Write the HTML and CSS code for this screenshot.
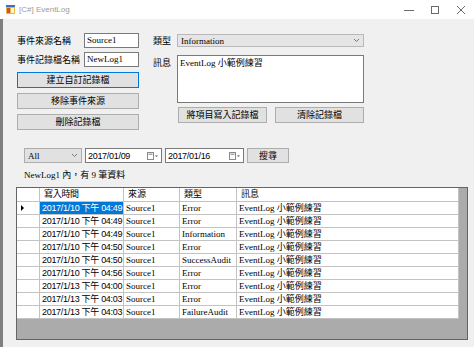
FILE: index.html
```html
<!DOCTYPE html>
<html>
<head>
    <meta charset="utf-8">
    <title>[C#] EventLog</title>
    <link rel="stylesheet" href="styles.css">
</head>
<body>
<div class="window">
    <div class="titlebar">
        <svg class="app-icon" width="9" height="9" viewBox="0 0 9 9">
            <rect x="0" y="0" width="9" height="9" fill="#e8b83a"/>
            <rect x="0" y="0" width="9" height="2" fill="#3a6fc4"/>
            <rect x="1" y="3" width="3" height="5" fill="#d9483b"/>
            <rect x="5" y="3" width="3" height="5" fill="#fff4c8"/>
        </svg>
        <span class="title">[C#] EventLog</span>
        <div class="caption-btns">
            <svg width="10" height="10" viewBox="0 0 10 10"><path d="M0 5.5h10" stroke="#6b6b6b" stroke-width="1"/></svg>
            <svg width="10" height="10" viewBox="0 0 10 10"><rect x="1.5" y="1.5" width="7" height="7" fill="none" stroke="#6b6b6b" stroke-width="1"/></svg>
            <svg width="10" height="10" viewBox="0 0 10 10"><path d="M1 1l8 8M9 1l-8 8" stroke="#6b6b6b" stroke-width="1"/></svg>
        </div>
    </div>

    <div class="client">
        <div class="top">
            <div class="left-col">
                <div class="field">
                    <span class="label wide">事件來源名稱</span>
                    <div class="textbox">Source1</div>
                </div>
                <div class="field second">
                    <span class="label wide">事件記錄檔名稱</span>
                    <div class="textbox">NewLog1</div>
                </div>
                <div class="btn focused">建立自訂記錄檔</div>
                <div class="btn">移除事件來源</div>
                <div class="btn">刪除記錄檔</div>
            </div>

            <div class="right-col">
                <div class="field">
                    <span class="label">類型</span>
                    <div class="combo type-combo">
                        <span>Information</span>
                        <svg width="7" height="5" viewBox="0 0 7 5"><path d="M1 1l2.5 2.5L6 1" fill="none" stroke="#777" stroke-width="1"/></svg>
                    </div>
                </div>
                <div class="field msg">
                    <span class="label">訊息</span>
                    <div class="textarea">EventLog 小範例練習</div>
                </div>
                <div class="btn-row">
                    <div class="btn">將項目寫入記錄檔</div>
                    <div class="btn">清除記錄檔</div>
                </div>
            </div>
        </div>

        <div class="filter">
            <div class="combo all-combo">
                <span>All</span>
                <svg width="7" height="5" viewBox="0 0 7 5"><path d="M1 1l2.5 2.5L6 1" fill="none" stroke="#777" stroke-width="1"/></svg>
            </div>
            <div class="datepicker date-from">
                <span>2017/01/09</span>
                <svg width="11" height="8" viewBox="0 0 11 8"><rect x="0.5" y="0.5" width="6" height="7" fill="#fff" stroke="#8a8a8a"/><rect x="1.5" y="1.5" width="4" height="1.5" fill="#a8a8a8"/><path d="M8 3.5h3L9.5 5z" fill="#555"/></svg>
            </div>
            <div class="datepicker date-to">
                <span>2017/01/16</span>
                <svg width="11" height="8" viewBox="0 0 11 8"><rect x="0.5" y="0.5" width="6" height="7" fill="#fff" stroke="#8a8a8a"/><rect x="1.5" y="1.5" width="4" height="1.5" fill="#a8a8a8"/><path d="M8 3.5h3L9.5 5z" fill="#555"/></svg>
            </div>
            <div class="btn search">搜尋</div>
        </div>

        <div class="count">NewLog1 內，有 9 筆資料</div>

        <div class="grid">
            <div class="grid-row header">
                <div class="cell rowhead"></div>
                <div class="cell c-time">寫入時間</div>
                <div class="cell c-src">來源</div>
                <div class="cell c-type">類型</div>
                <div class="cell c-msg">訊息</div>
            </div>
            <div class="grid-row">
                <div class="cell rowhead"><span class="current"></span></div>
                <div class="cell c-time selected">2017/1/10 下午 04:49</div>
                <div class="cell c-src">Source1</div>
                <div class="cell c-type">Error</div>
                <div class="cell c-msg">EventLog 小範例練習</div>
            </div>
            <div class="grid-row">
                <div class="cell rowhead"></div>
                <div class="cell c-time">2017/1/10 下午 04:49</div>
                <div class="cell c-src">Source1</div>
                <div class="cell c-type">Error</div>
                <div class="cell c-msg">EventLog 小範例練習</div>
            </div>
            <div class="grid-row">
                <div class="cell rowhead"></div>
                <div class="cell c-time">2017/1/10 下午 04:49</div>
                <div class="cell c-src">Source1</div>
                <div class="cell c-type">Information</div>
                <div class="cell c-msg">EventLog 小範例練習</div>
            </div>
            <div class="grid-row">
                <div class="cell rowhead"></div>
                <div class="cell c-time">2017/1/10 下午 04:50</div>
                <div class="cell c-src">Source1</div>
                <div class="cell c-type">Error</div>
                <div class="cell c-msg">EventLog 小範例練習</div>
            </div>
            <div class="grid-row">
                <div class="cell rowhead"></div>
                <div class="cell c-time">2017/1/10 下午 04:50</div>
                <div class="cell c-src">Source1</div>
                <div class="cell c-type">SuccessAudit</div>
                <div class="cell c-msg">EventLog 小範例練習</div>
            </div>
            <div class="grid-row">
                <div class="cell rowhead"></div>
                <div class="cell c-time">2017/1/10 下午 04:56</div>
                <div class="cell c-src">Source1</div>
                <div class="cell c-type">Error</div>
                <div class="cell c-msg">EventLog 小範例練習</div>
            </div>
            <div class="grid-row">
                <div class="cell rowhead"></div>
                <div class="cell c-time">2017/1/13 下午 04:00</div>
                <div class="cell c-src">Source1</div>
                <div class="cell c-type">Error</div>
                <div class="cell c-msg">EventLog 小範例練習</div>
            </div>
            <div class="grid-row">
                <div class="cell rowhead"></div>
                <div class="cell c-time">2017/1/13 下午 04:03</div>
                <div class="cell c-src">Source1</div>
                <div class="cell c-type">Error</div>
                <div class="cell c-msg">EventLog 小範例練習</div>
            </div>
            <div class="grid-row">
                <div class="cell rowhead"></div>
                <div class="cell c-time">2017/1/13 下午 04:03</div>
                <div class="cell c-src">Source1</div>
                <div class="cell c-type">FailureAudit</div>
                <div class="cell c-msg">EventLog 小範例練習</div>
            </div>
        </div>
    </div>
</div>
</body>
</html>
```

FILE: styles.css
```css
* {
    margin: 0;
    padding: 0;
    box-sizing: border-box;
}
body {
    background: #f0f0f0;
    font-family: "Noto Sans CJK TC", sans-serif;
    font-size: 9px;
    color: #000;
}
.window {
    width: 474px;
    height: 347px;
    display: flex;
    flex-direction: column;
    overflow: hidden;
}
.titlebar {
    height: 19px;
    background: #fff;
    display: flex;
    align-items: center;
    padding-left: 6px;
}
.app-icon {
    display: block;
}
.title {
    margin-left: 4px;
    font-family: "Liberation Sans", sans-serif;
    font-size: 8px;
    color: #9a9a9a;
}
.caption-btns {
    margin-left: auto;
    display: flex;
    align-items: center;
    gap: 16px;
    padding-right: 8px;
}
.caption-btns svg {
    display: block;
}
.client {
    flex: 1;
    background: #f0f0f0;
    border-left: 3px solid #7f7f7f;
    padding: 14px 0 0 13px;
}

/* top area */
.top {
    display: flex;
    height: 97px;
}
.left-col {
    margin-left: 1px;
    width: 122px;
    display: flex;
    flex-direction: column;
}
.field {
    display: flex;
    align-items: center;
    height: 15px;
}
.field.second {
    margin-top: 4px;
}
.label {
    width: 24px;
    line-height: 12px;
    white-space: nowrap;
}
.label.wide {
    width: 67px;
}
.textbox {
    width: 55px;
    height: 15px;
    background: #fff;
    border: 1px solid #7a7a7a;
    padding-left: 2px;
    font-family: "Liberation Serif", serif;
    line-height: 13px;
}
.btn {
    height: 16px;
    margin-top: 5px;
    background: #e1e1e1;
    border: 1px solid #adadad;
    text-align: center;
    line-height: 14px;
    white-space: nowrap;
}
.btn.focused {
    border-color: #0078d7;
}
.right-col {
    margin-left: 14px;
    display: flex;
    flex-direction: column;
}
.combo {
    display: flex;
    align-items: center;
    justify-content: space-between;
    height: 13px;
    background: #e5e5e5;
    border: 1px solid #b9b9b9;
    padding: 0 3px;
    font-family: "Liberation Serif", serif;
}
.combo svg {
    display: block;
}
.type-combo {
    width: 187px;
}
.field.msg {
    margin-top: 7px;
    height: auto;
    align-items: flex-start;
}
.field.msg .label {
    margin-top: 2px;
}
.textarea {
    width: 187px;
    height: 48px;
    background: #fff;
    border: 1px solid #7a7a7a;
    padding: 1px 2px;
    font-family: "Liberation Serif", "Noto Sans CJK TC", serif;
    line-height: 12px;
}
.btn-row {
    display: flex;
    gap: 8px;
    margin-left: 25px;
    margin-top: -1px;
}
.btn-row .btn {
    width: 89px;
}

/* filter row */
.filter {
    display: flex;
    gap: 3px;
    margin-top: 18px;
    padding-left: 8px;
    height: 15px;
}
.all-combo {
    width: 58px;
    height: 15px;
    background: #e1e1e1;
    border-color: #adadad;
}
.datepicker {
    display: flex;
    align-items: center;
    justify-content: space-between;
    height: 15px;
    background: #fff;
    border: 1px solid #7a7a7a;
    padding: 0 3px 0 2px;
    font-family: "Liberation Sans", sans-serif;
    letter-spacing: -0.3px;
}
.datepicker svg {
    display: block;
}
.date-from {
    width: 77px;
}
.date-to {
    width: 79px;
}
.btn.search {
    width: 42px;
    height: 15px;
    margin-top: 0;
    line-height: 13px;
}
.count {
    margin-top: 6px;
    padding-left: 8px;
    line-height: 12px;
    font-family: "Liberation Serif", "Noto Sans CJK TC", serif;
}

/* data grid */
.grid {
    margin-top: 6px;
    width: 452px;
    height: 153px;
    background: #ababab;
    border: 1px solid #646464;
}
.grid-row {
    display: flex;
    height: 13px;
}
.grid-row.header {
    height: 14px;
}
.cell {
    height: 100%;
    background: #fff;
    border-right: 1px solid #c3c3c3;
    border-bottom: 1px solid #c3c3c3;
    padding-left: 2px;
    line-height: 12px;
    white-space: nowrap;
    overflow: hidden;
    font-family: "Liberation Serif", "Noto Sans CJK TC", serif;
}
.header .cell {
    font-family: "Noto Sans CJK TC", sans-serif;
    padding-left: 4px;
}
.rowhead {
    width: 23px;
    position: relative;
}
.current {
    position: absolute;
    left: 4px;
    top: 3px;
    border-left: 3px solid #000;
    border-top: 3px solid transparent;
    border-bottom: 3px solid transparent;
}
.c-time {
    width: 84px;
    font-family: "Liberation Sans", "Noto Sans CJK TC", sans-serif;
    letter-spacing: -0.3px;
}
.c-src {
    width: 56px;
}
.c-type {
    width: 57px;
}
.c-msg {
    width: 222px;
}
.cell.selected {
    background: #0078d7;
    color: #fff;
}
```
